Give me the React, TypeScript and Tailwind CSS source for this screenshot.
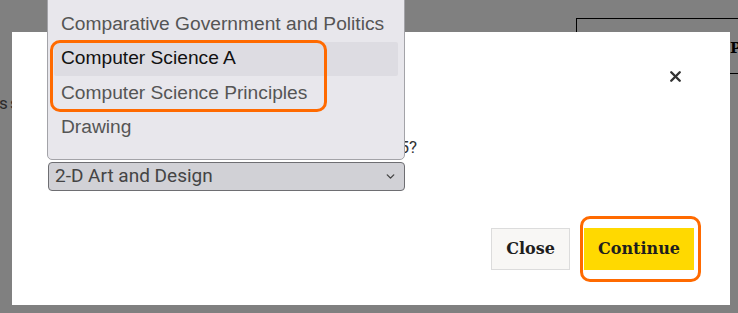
import { ChevronDown, X } from 'lucide-react';

const options = [
  'Comparative Government and Politics',
  'Computer Science A',
  'Computer Science Principles',
  'Drawing',
];

export default function App() {
  return (
    <div className="relative w-[738px] h-[313px] overflow-hidden bg-[#808080] font-['Roboto',sans-serif]">
      {/* page behind the overlay */}
      <div className="absolute left-[576px] top-[18px] w-[200px] h-[56px] border border-black">
        <span className="absolute left-[153px] top-[18px] font-['DejaVu_Serif',serif] font-bold text-[15px] text-black">P</span>
      </div>
      <span className="absolute left-[-1px] top-[91px] text-[17px] tracking-[-1px] text-[#2a2a2a]">s s</span>

      {/* modal */}
      <div className="absolute left-[12px] top-[32px] w-[718px] h-[273px] bg-white flex flex-col px-9 pb-[35px]">
        <div className="flex justify-end pt-[36px] pr-[10px]">
          <X className="w-[17px] h-[17px] text-[#333]" strokeWidth={3.4} />
        </div>
        <p className="mt-[52px] w-[369px] text-right text-[17px] leading-5 text-[#333]">What AP Exam do you plan to take in May 2025?</p>
        <div className="mt-[5px] w-[357px] h-[29px] flex items-center justify-between pl-[6px] pr-[7px] bg-[#d1d1d6] border border-[#6e6e72] rounded-[4px]">
          <span className="text-[19px] text-[#444]">2-D Art and Design</span>
          <ChevronDown className="w-[13px] h-[13px] text-[#444]" strokeWidth={2.5} />
        </div>
        <div className="mt-auto flex justify-end gap-[14px]">
          <button className="w-[79px] h-[42px] bg-[#f8f7f5] border border-[#dcdcdc] font-['DejaVu_Serif',serif] font-bold text-[16px] text-[#1e1e1e]">
            Close
          </button>
          <div className="relative">
            <button className="w-[110px] h-[42px] bg-[#ffd900] font-['DejaVu_Serif',serif] font-bold text-[16px] text-[#1e1e1e]">
              Continue
            </button>
            <div className="absolute -left-[4px] -right-[7px] -top-[12px] -bottom-[12px] border-[3px] border-[#ff6a00] rounded-[10px]" />
          </div>
        </div>
      </div>

      {/* open select list */}
      <div className="absolute left-[47px] top-[-10px] w-[358px] bg-[#e8e7ec] border border-[#a3a3a8] rounded-[5px] pt-[16px] pb-[14px] flex flex-col px-[6px] font-['Liberation_Sans',sans-serif]">
        {options.map((o) => (
          <div
            key={o}
            className={
              'h-[34.5px] flex items-center px-[7px] text-[19.2px] rounded-[2px] ' +
              (o === 'Computer Science A' ? 'bg-[#dddce2] text-[#111]' : 'text-[#555]')
            }
          >
            {o}
          </div>
        ))}
        <div className="absolute left-[2px] top-[49px] w-[277px] h-[72px] border-[3px] border-[#ff6a00] rounded-[10px]" />
      </div>
    </div>
  );
}
